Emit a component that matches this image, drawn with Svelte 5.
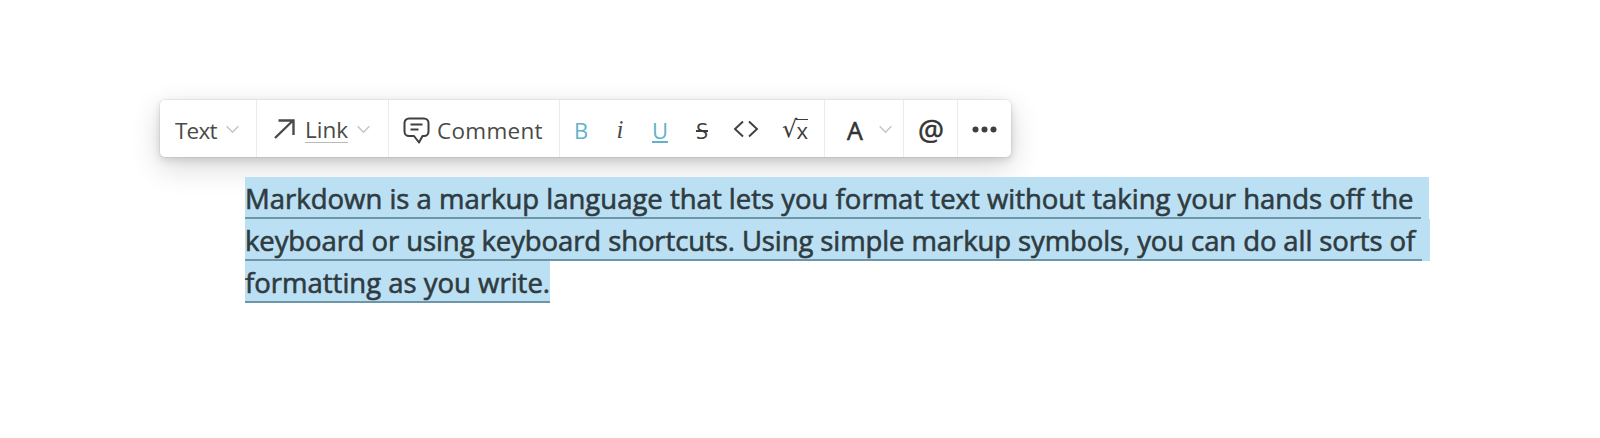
<script>
  const lines = [
    { text: 'Markdown is a markup language that lets you format text without taking your hands off the', trail: true },
    { text: 'keyboard or using keyboard shortcuts. Using simple markup symbols, you can do all sorts of', trail: true },
    { text: 'formatting as you write.', trail: false }
  ];
</script>

<div class="page">
  <div class="toolbar">
    <div class="group text-group">
      <span class="label text-label">Text</span>
      <svg class="chev" viewBox="0 0 16 10"><path d="M1.500 1.500 8 8l6.500-6.500" /></svg>
    </div>
    <div class="group link-group">
      <svg class="arrow" viewBox="0 0 22 20"><path d="M2 19 19 2.500M5.500 1.500H20.500V16" /></svg>
      <span class="label link">Link</span>
      <svg class="chev" viewBox="0 0 16 10"><path d="M1.500 1.500 8 8l6.500-6.500" /></svg>
    </div>
    <div class="group comment-group">
      <svg class="bubble" viewBox="0 0 27 27"><path d="M6 1.500h15a4.500 4.500 0 0 1 4.500 4.500v8.500a4.500 4.500 0 0 1-4.500 4.500h-1.500l-3.500 6.500-5-6.500H6a4.500 4.500 0 0 1-4.500-4.500V6A4.500 4.500 0 0 1 6 1.500ZM7.500 7.500h12M7.500 12.500h8" /></svg>
      <span class="label comment">Comment</span>
    </div>
    <div class="group format-group">
      <span class="fmt bold">B</span>
      <span class="fmt italic">i</span>
      <span class="fmt under">U</span>
      <span class="fmt strike">S</span>
      <span class="fmt code-cell"><svg class="code" viewBox="0 0 26 18"><path d="M10 1.500 2 9l8 7.500M16 1.500 24 9l-8 7.500" /></svg></span>
      <span class="fmt math"><span class="root">√</span><span class="over">x</span></span>
    </div>
    <div class="group color-group">
      <span class="big-a">A</span>
      <svg class="chev" viewBox="0 0 16 10"><path d="M1.500 1.500 8 8l6.500-6.500" /></svg>
    </div>
    <div class="group at-group"><span class="at">@</span></div>
    <div class="group more-group">
      <svg class="dots" viewBox="0 0 25 7"><circle cx="3.500" cy="3.500" r="3" /><circle cx="12.500" cy="3.500" r="3" /><circle cx="21.500" cy="3.500" r="3" /></svg>
    </div>
  </div>

  <div class="para">
    {#each lines as line}
      <div class="line" class:trail={line.trail}><span class="ink">{line.text}</span></div>
    {/each}
  </div>
</div>

<style>
  :global(body) {
    margin: 0;
    background: #fff;
  }

  .page {
    height: 438px;
    overflow: hidden;
    padding-top: 100px;
    box-sizing: border-box;
    font-family: "Open Sans", "Noto Sans", sans-serif;
    color: #3c3c3a;
  }

  .toolbar {
    display: flex;
    width: 851px;
    height: 57px;
    margin-left: 160px;
    background: #fff;
    border-radius: 5px;
    box-shadow: 0 0 0 1px rgba(15, 15, 15, 0.05), 0 3px 8px rgba(15, 15, 15, 0.14), 0 10px 30px rgba(15, 15, 15, 0.16);
  }

  .group {
    display: flex;
    align-items: center;
    box-sizing: border-box;
    border-right: 1px solid #ebebea;
    flex: none;
  }

  .group:last-child {
    border-right: 0;
  }

  .text-group { width: 97px; padding-left: 15px; gap: 8px; }
  .link-group { width: 132px; padding-left: 16px; gap: 10px; }
  .comment-group { width: 171px; padding-left: 14px; gap: 7px; }
  .format-group { width: 265px; padding-left: 1px; }
  .color-group { width: 79px; padding-left: 22px; gap: 15px; }
  .at-group { width: 54px; padding-left: 14px; }
  .more-group { width: 53px; padding-left: 14px; }

  .label {
    font-size: 22.500px;
    color: #4a4a48;
    margin-top: 3px;
  }

  .text-label {
    letter-spacing: -0.800px;
  }

  .comment {
    letter-spacing: 0.300px;
  }

  .link {
    border-bottom: 1px solid #b9b9b7;
    line-height: 24px;
  }

  .chev {
    width: 15px;
    height: 9px;
    fill: none;
    stroke: #c4c4c2;
    stroke-width: 1.600;
    margin-top: 1px;
  }

  .link-group .chev {
    margin-left: -2px;
  }

  .arrow {
    width: 22px;
    height: 20px;
    fill: none;
    stroke: #4a4a48;
    stroke-width: 2.400;
  }

  .bubble {
    width: 27px;
    height: 27px;
    fill: none;
    stroke: #3f3f3d;
    stroke-width: 2;
    stroke-linejoin: round;
    margin-top: 3px;
  }

  .fmt {
    font-size: 22px;
    color: #3c3c3a;
    display: block;
    text-align: center;
    flex: none;
    margin-top: 2px;
  }

  .bold { width: 40px; color: #62b2ca; }
  .italic { width: 38px; font-style: italic; font-family: "Liberation Serif", serif; font-size: 25px; color: #4a4a48; }
  .under {
    width: 42px;
    color: #62b2ca;
    text-decoration: underline;
    text-decoration-thickness: 2px;
    text-underline-offset: 2px;
  }
  .strike { width: 42px; text-decoration: line-through; }

  .code-cell {
    display: flex;
    justify-content: center;
    width: 46px;
    margin-top: 0;
  }

  .code {
    width: 26px;
    height: 18px;
    fill: none;
    stroke: #3f3f3d;
    stroke-width: 1.900;
  }

  .math {
    display: flex;
    justify-content: center;
    align-items: flex-end;
    width: 50px;
    margin-top: 0;
    margin-left: 1px;
  }

  .root {
    font-family: "DejaVu Sans", sans-serif;
    font-size: 24px;
    line-height: 24px;
  }

  .over {
    border-top: 1.500px solid #3c3c3a;
    font-size: 22px;
    line-height: 21px;
    display: block;
    margin-left: -1px;
  }

  .big-a {
    font-size: 25px;
    color: #333;
    -webkit-text-stroke: 0.600px #333;
    margin-top: 2px;
  }

  .at {
    font-size: 29px;
    color: #333;
    -webkit-text-stroke: 0.500px #333;
    margin-top: 1px;
  }

  .dots {
    width: 25px;
    height: 7px;
    fill: #3f3f3d;
    margin-top: 2px;
  }

  .para {
    margin: 20px 0 0 245px;
    font-size: 27.500px;
    -webkit-text-stroke: 0.600px #2f3b40;
    color: #2f3b40;
  }

  .line {
    height: 42px;
    width: fit-content;
    background: #bce0f3;
  }

  .line:nth-child(2) {
    letter-spacing: -0.100px;
  }

  .line.trail {
    padding-right: 8px;
  }

  .line.trail .ink {
    padding-right: 7px;
  }

  .ink {
    display: block;
    box-sizing: border-box;
    height: 42px;
    line-height: 43px;
    border-bottom: 2px solid #6d97a8;
    white-space: nowrap;
  }
</style>
